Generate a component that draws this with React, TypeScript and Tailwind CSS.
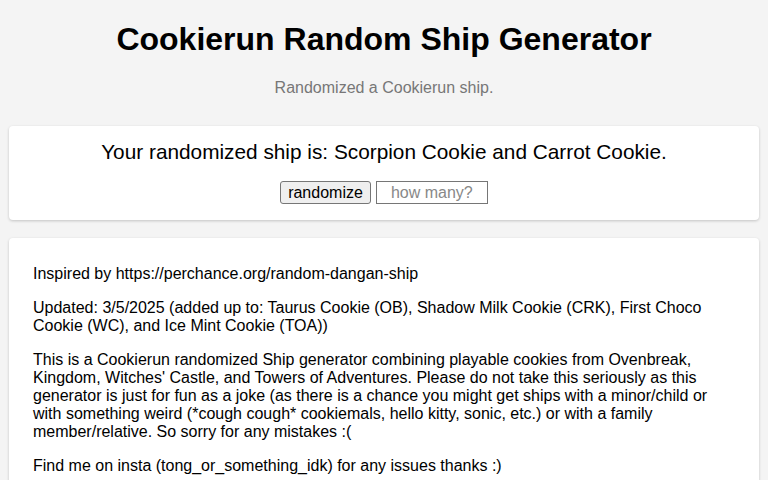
export default function App() {
  return (
    <div className="min-h-screen bg-[#f4f4f4] px-[9px] text-[16px] text-[#111] [font-family:'Liberation_Sans',Arial,sans-serif]">
      <h1 className="pt-[21px] text-center text-[32px] font-bold leading-[37px] text-black">Cookierun Random Ship Generator</h1>
      <p className="mt-[21px] text-center leading-[18px] text-[#777]">Randomized a Cookierun ship.</p>

      <div className="mt-[29px] rounded bg-white px-4 pb-4 pt-[14px] text-center shadow-[0_1px_3px_rgba(0,0,0,0.2)]">
        <p className="text-[20.8px] leading-[24px] text-black">Your randomized ship is: Scorpion Cookie and Carrot Cookie.</p>
        <div className="mt-[17px] flex justify-center gap-[5px]">
          <button className="h-[23px] rounded-[3px] border border-[#767676] bg-[#efefef] px-[7px] leading-[19px] text-black">
            randomize
          </button>
          <input
            className="h-[23px] w-[112px] border border-[#767676] bg-white text-center leading-[19px] text-black placeholder:text-[#888] outline-none"
            placeholder="how many?"
          />
        </div>
      </div>

      <div className="mt-[18px] rounded bg-white px-6 pb-6 pt-[27px] leading-[18px] text-black shadow-[0_1px_3px_rgba(0,0,0,0.2)]">
        <p>Inspired by https://perchance.org/random-dangan-ship</p>
        <p className="mt-4">
          Updated: 3/5/2025 (added up to: Taurus Cookie (OB), Shadow Milk Cookie (CRK), First Choco Cookie (WC), and Ice Mint Cookie (TOA))
        </p>
        <p className="mt-4">
          This is a Cookierun randomized Ship generator combining playable cookies from Ovenbreak, Kingdom, Witches' Castle, and Towers of Adventures. Please do not take this seriously as this generator is just for fun as a joke (as there is a chance you might get ships with a minor/child or with something weird (*cough cough* cookiemals, hello kitty, sonic, etc.) or with a family member/relative. So sorry for any mistakes :(
        </p>
        <p className="mt-4">Find me on insta (tong_or_something_idk) for any issues thanks :)</p>
      </div>
    </div>
  )
}
